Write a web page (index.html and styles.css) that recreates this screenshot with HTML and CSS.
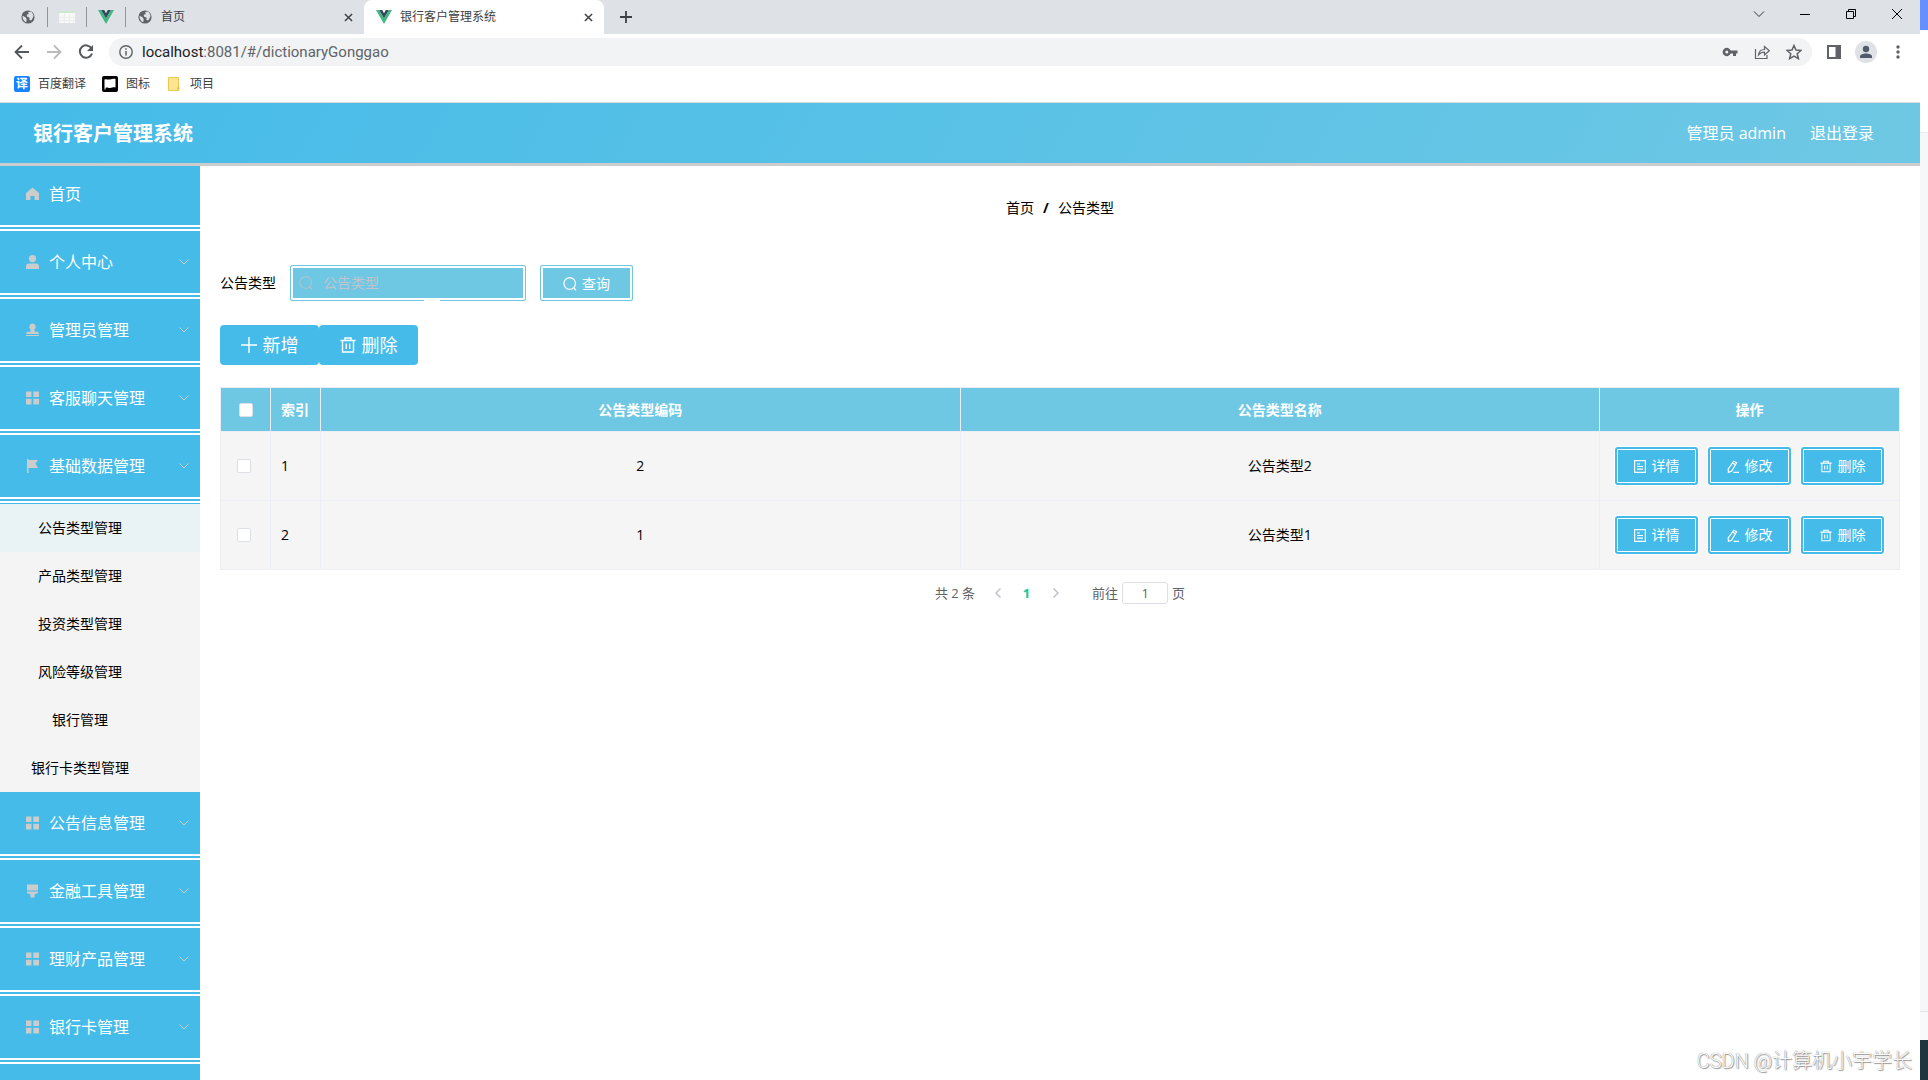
FILE: index.html
```html
<!DOCTYPE html>
<html lang="zh-CN">
<head>
    <meta charset="utf-8">
    <title>银行客户管理系统</title>
    <link rel="stylesheet" href="styles.css">
</head>
<body>
    <!-- shared icons -->
    <svg class="icon-defs" aria-hidden="true">
        <symbol id="i-globe" viewBox="0 0 16 16"><circle cx="8" cy="8" r="7.5" fill="#5f6368"/><path d="M2 6.500l3.500 2 1 2-.5 3.500C3.500 13 2 11 1.800 8zM8 2.500l3-.8c2 1 3.200 3 3.300 5.300-1 1.500-1 3-2.800 5l-2-1 .3-2.300-2.800-1L6.500 5.500 9 4.500z" fill="#dee1e6"/></symbol>
        <symbol id="i-vue" viewBox="0 0 16 14"><path d="M0 0h3.200L8 8.300 12.800 0H16L8 14z" fill="#41b883"/><path d="M3.200 0h3L8 3.200 9.800 0h3L8 8.300z" fill="#35495e"/></symbol>
        <symbol id="i-x" viewBox="0 0 10 10"><path d="M1 1l8 8M9 1L1 9" fill="none" stroke="currentColor" stroke-width="1.600"/></symbol>
        <symbol id="i-grid" viewBox="0 0 13 13"><path d="M0 0h5.500v5.500H0zM7.300 0H13v5.500H7.300zM0 7.300h5.500V13H0zM7.300 7.300H13V13H7.300z" fill="currentColor"/></symbol>
        <symbol id="i-home" viewBox="0 0 13 13"><path d="M6.500 0L13 5.500V12.500H8.500V8.500h-4v4H0v-7z" fill="currentColor"/></symbol>
        <symbol id="i-user" viewBox="0 0 13 14"><circle cx="6.500" cy="3.600" r="3.600" fill="currentColor"/><path d="M0 14v-2.500Q0 8.500 3 8.500h7q3 0 3 3V14z" fill="currentColor"/></symbol>
        <symbol id="i-stamp" viewBox="0 0 13 13"><path d="M6.500 0a3.300 3.300 0 0 1 2 5.900V8.300H12l1 2.200H0l1-2.200h3.500V5.900A3.300 3.300 0 0 1 6.500 0zM0 11.500h13v1H0z" fill="currentColor"/></symbol>
        <symbol id="i-flag" viewBox="0 0 13 14"><path d="M1 0h1.500v1H12L9.500 4.500 12 9H2.500v5H1z" fill="currentColor"/></symbol>
        <symbol id="i-brush" viewBox="0 0 13 13"><path d="M1 0h11v6H1zM1 7h11v1.500L8.500 10v3h-4v-3L1 8.500z" fill="currentColor"/></symbol>
        <symbol id="i-down" viewBox="0 0 10 6"><path d="M.5.5L5 5 9.500.5" fill="none" stroke="currentColor"/></symbol>
        <symbol id="i-search" viewBox="0 0 14 14"><path d="M11 11l2 2.300M12.500 6.500a5.800 5.800 0 1 1-11.600 0 5.800 5.800 0 0 1 11.600 0z" fill="none" stroke="currentColor" stroke-width="1.200"/></symbol>
        <symbol id="i-trash" viewBox="0 0 16 16"><path d="M.5 3.500h15M5 3V1h6v2M2.500 3.500v11.500h11V3.500M6.300 6.500v5.500M9.700 6.500v5.500" fill="none" stroke="currentColor" stroke-width="1.400"/></symbol>
        <symbol id="i-doc" viewBox="0 0 12 13"><path d="M.6.6h10.800v11.800H.6zM3 4h3M3 6.500h6M3 9.200h6" fill="none" stroke="currentColor" stroke-width="1.200"/></symbol>
        <symbol id="i-edit" viewBox="0 0 12 13"><path d="M6.800 1.200l2.800 1.600-5 8.500-3.200 1L1.200 9zM5.500 3l3 1.800M6.500 12.400H12" fill="none" stroke="currentColor" stroke-width="1.200"/></symbol>
    </svg>

    <div class="browser">
        <div class="tab-strip">
            <div class="pinned"><svg class="fav"><use href="#i-globe"/></svg></div>
            <div class="pinned"><svg class="fav" viewBox="0 0 16 14"><path d="M0 1h16v12H0z" fill="#f8f8f8"/><path d="M0 1h16v2H0z" fill="#cde8cd"/><path d="M0 7.500h16M0 10.500h16M5.500 4v9M10.500 4v9" stroke="#ececec"/></svg></div>
            <div class="pinned"><svg class="fav"><use href="#i-vue"/></svg></div>
            <div class="tab"><svg class="fav"><use href="#i-globe"/></svg><span>首页</span><button class="tab-close" aria-label="关闭"><svg><use href="#i-x"/></svg></button></div>
            <div class="tab active"><svg class="fav"><use href="#i-vue"/></svg><span>银行客户管理系统</span><button class="tab-close" aria-label="关闭"><svg><use href="#i-x"/></svg></button></div>
            <button class="new-tab" aria-label="新标签页"><svg viewBox="0 0 12 12"><path d="M6 0v12M0 6h12" stroke="#3c4043" stroke-width="1.800"/></svg></button>
            <div class="win-buttons">
                <button aria-label="搜索标签页"><svg viewBox="0 0 12 12"><path d="M1 3.500l5 5 5-5" fill="none" stroke="#333"/></svg></button>
                <button aria-label="最小化"><svg viewBox="0 0 12 12"><path d="M1 6.500h10" stroke="#000"/></svg></button>
                <button aria-label="还原"><svg viewBox="0 0 12 12"><path d="M1.500 3.500h7v7h-7zM3.500 3V1.500h7v7H9" fill="none" stroke="#000"/></svg></button>
                <button aria-label="关闭窗口"><svg viewBox="0 0 12 12"><path d="M1 1l10 10M11 1L1 11" stroke="#000"/></svg></button>
            </div>
        </div>

        <div class="toolbar">
            <button aria-label="后退"><svg viewBox="0 0 16 16"><path d="M15 8H2M8 1.500L1.500 8 8 14.500" fill="none" stroke="#54585d" stroke-width="1.800"/></svg></button>
            <button aria-label="前进"><svg viewBox="0 0 16 16"><path d="M1 8h13M8 1.500L14.500 8 8 14.500" fill="none" stroke="#bbb" stroke-width="1.800"/></svg></button>
            <button aria-label="刷新"><svg viewBox="0 0 16 16"><path d="M13.500 4.500A6.200 6.200 0 1 0 14 9.500" fill="none" stroke="#54585d" stroke-width="2"/><path d="M15 1v6H9z" fill="#54585d"/></svg></button>
            <div class="omnibox">
                <svg class="info" viewBox="0 0 14 14"><circle cx="7" cy="7" r="6.200" fill="none" stroke="#5f6368" stroke-width="1.400"/><path d="M7 6v4.500M7 3.300v1.500" stroke="#5f6368" stroke-width="1.500"/></svg>
                <span class="url"><b>localhost</b>:8081/#/dictionaryGonggao</span>
                <button aria-label="密码"><svg viewBox="0 0 16 16"><path d="M8.700 6.500A4.200 4.200 0 1 0 8.700 9.500H11V12h3V9.500h1.500v-3zM4.800 9.500a1.500 1.500 0 1 1 0-3 1.500 1.500 0 0 1 0 3z" fill="#5f6368" fill-rule="evenodd"/></svg></button>
                <button aria-label="分享"><svg viewBox="0 0 16 16"><path d="M1.500 5v9.500h11.500V11M4.500 11c.3-3.500 2.500-5.500 6-5.500V2.500l4.800 4.300-4.800 4.200V8c-2.500 0-4.300.8-6 3z" fill="none" stroke="#5f6368" stroke-width="1.200"/></svg></button>
                <button aria-label="收藏"><svg viewBox="0 0 16 16"><path d="M8 1.500l2 4.600 5 .4-3.800 3.300 1.200 4.900L8 12.100l-4.400 2.600 1.200-4.900L1 6.500l5-.4z" fill="none" stroke="#5f6368" stroke-width="1.500"/></svg></button>
            </div>
            <button aria-label="侧边栏"><svg viewBox="0 0 16 16"><path d="M1 1h14v14H1z" fill="#5f6368"/><path d="M3 3h6.500v10H3z" fill="#fff"/></svg></button>
            <button class="avatar" aria-label="用户"><svg viewBox="0 0 22 22"><circle cx="11" cy="11" r="11" fill="#dee1e6"/><circle cx="11" cy="8" r="3.200" fill="#505a6b"/><path d="M5 17v-1.500c0-2 3-3 6-3s6 1 6 3V17z" fill="#505a6b"/></svg></button>
            <button aria-label="菜单"><svg viewBox="0 0 16 16"><g fill="#5f6368"><circle cx="8" cy="3" r="1.700"/><circle cx="8" cy="8" r="1.700"/><circle cx="8" cy="13" r="1.700"/></g></svg></button>
        </div>

        <div class="bookmarks">
            <a href="#"><span class="fanyi">译</span>百度翻译</a>
            <a href="#"><svg viewBox="0 0 16 16"><rect width="16" height="16" rx="2"/><path d="M2.500 13.500V3.500c2-1 3.500.5 5.500 0s3.500-1 5.500-.5v8.500c-2-.5-3.500.5-5.500.5s-3-1-4.500 0v1.500z" fill="#fff"/></svg>图标</a>
            <a href="#"><svg viewBox="0 0 16 16"><path d="M2.500 1.500h10v13h-10z" fill="#ffe591" stroke="#edc850"/><path d="M11 14.500v-3l2.500-1v4z" fill="#edc850"/></svg>项目</a>
        </div>

        <header class="app-header">
            <h1>银行客户管理系统</h1>
            <span class="who">管理员 admin</span>
            <a href="#">退出登录</a>
        </header>

        <div class="app-body">
            <nav class="sidebar">
                <a class="menu-item" href="#"><svg><use href="#i-home"/></svg><span>首页</span></a>
                <a class="menu-item" href="#"><svg><use href="#i-user"/></svg><span>个人中心</span><svg class="arrow"><use href="#i-down"/></svg></a>
                <a class="menu-item" href="#"><svg><use href="#i-stamp"/></svg><span>管理员管理</span><svg class="arrow"><use href="#i-down"/></svg></a>
                <a class="menu-item" href="#"><svg><use href="#i-grid"/></svg><span>客服聊天管理</span><svg class="arrow"><use href="#i-down"/></svg></a>
                <a class="menu-item" href="#"><svg><use href="#i-flag"/></svg><span>基础数据管理</span><svg class="arrow"><use href="#i-down"/></svg></a>
                <div class="submenu">
                    <a class="active" href="#">公告类型管理</a>
                    <a href="#">产品类型管理</a>
                    <a href="#">投资类型管理</a>
                    <a href="#">风险等级管理</a>
                    <a href="#">银行管理</a>
                    <a href="#">银行卡类型管理</a>
                </div>
                <a class="menu-item" href="#"><svg><use href="#i-grid"/></svg><span>公告信息管理</span><svg class="arrow"><use href="#i-down"/></svg></a>
                <a class="menu-item" href="#"><svg><use href="#i-brush"/></svg><span>金融工具管理</span><svg class="arrow"><use href="#i-down"/></svg></a>
                <a class="menu-item" href="#"><svg><use href="#i-grid"/></svg><span>理财产品管理</span><svg class="arrow"><use href="#i-down"/></svg></a>
                <a class="menu-item" href="#"><svg><use href="#i-grid"/></svg><span>银行卡管理</span><svg class="arrow"><use href="#i-down"/></svg></a>
            </nav>

            <main class="content">
                <div class="breadcrumb"><a href="#">首页</a><b>/</b><span>公告类型</span></div>

                <form class="search">
                    <label for="type-name">公告类型</label>
                    <div class="search-box">
                        <svg><use href="#i-search"/></svg>
                        <input type="text" id="type-name" placeholder="公告类型">
                    </div>
                    <button type="button" class="query"><svg><use href="#i-search"/></svg>查询</button>
                </form>

                <div class="actions">
                    <button type="button"><svg viewBox="0 0 16 16"><path d="M8 0v16M0 8h16" stroke="currentColor" stroke-width="1.400"/></svg>新增</button>
                    <button type="button"><svg><use href="#i-trash"/></svg>删除</button>
                </div>

                <table class="list">
                    <thead>
                        <tr>
                            <th class="col-check"><input type="checkbox" aria-label="全选"></th>
                            <th class="col-index">索引</th>
                            <th>公告类型编码</th>
                            <th>公告类型名称</th>
                            <th class="col-ops">操作</th>
                        </tr>
                    </thead>
                    <tbody>
                        <tr>
                            <td class="col-check"><input type="checkbox" aria-label="选择第1行"></td>
                            <td class="col-index">1</td>
                            <td>2</td>
                            <td>公告类型2</td>
                            <td><div class="ops">
                                <button type="button"><svg><use href="#i-doc"/></svg>详情</button>
                                <button type="button"><svg><use href="#i-edit"/></svg>修改</button>
                                <button type="button"><svg><use href="#i-trash"/></svg>删除</button>
                            </div></td>
                        </tr>
                        <tr>
                            <td class="col-check"><input type="checkbox" aria-label="选择第2行"></td>
                            <td class="col-index">2</td>
                            <td>1</td>
                            <td>公告类型1</td>
                            <td><div class="ops">
                                <button type="button"><svg><use href="#i-doc"/></svg>详情</button>
                                <button type="button"><svg><use href="#i-edit"/></svg>修改</button>
                                <button type="button"><svg><use href="#i-trash"/></svg>删除</button>
                            </div></td>
                        </tr>
                    </tbody>
                </table>

                <div class="pagination">
                    <span>共 2 条</span>
                    <button type="button" aria-label="上一页"><svg viewBox="0 0 8 10"><path d="M6.500.5L2 5l4.500 4.500" fill="none" stroke="#c0c4cc" stroke-width="1.500"/></svg></button>
                    <button type="button" class="current">1</button>
                    <button type="button" aria-label="下一页"><svg viewBox="0 0 8 10"><path d="M1.500.5L6 5 1.500 9.500" fill="none" stroke="#c0c4cc" stroke-width="1.500"/></svg></button>
                    <label class="jump">前往<input type="text" value="1">页</label>
                </div>
            </main>
        </div>
    </div>

    <div class="edge">
        <div class="edge-blue"></div>
        <div class="edge-white"></div>
        <div class="edge-grey"></div>
        <div class="edge-line"></div>
        <div class="edge-dark"></div>
    </div>
    <div class="watermark">CSDN @计算机小宇学长</div>
</body>
</html>
```

FILE: styles.css
```css
* {
    box-sizing: border-box;
}

body {
    display: flex;
    height: 100vh;
    margin: 0;
    overflow: hidden;
    background: #fff;
    color: #000;
    font-family: "Open Sans", "Noto Sans CJK SC", sans-serif;
    font-size: 14px;
    line-height: 20px;
}

a {
    color: inherit;
    text-decoration: none;
}

button {
    display: flex;
    align-items: center;
    justify-content: center;
    padding: 0;
    border: none;
    background: none;
    color: inherit;
    font: inherit;
}

input {
    font: inherit;
}

svg {
    display: block;
    flex: none;
}

.icon-defs {
    position: absolute;
    width: 0;
    height: 0;
}

.browser {
    display: flex;
    flex: 1;
    flex-direction: column;
    min-width: 0;
}

/* tabs */
.tab-strip {
    display: flex;
    flex: none;
    align-items: flex-end;
    height: 34px;
    padding-left: 9px;
    background: #dee1e6;
    color: #3c4043;
    font-size: 12px;
}

.fav {
    width: 16px;
    height: 14px;
}

.pinned {
    display: flex;
    align-items: center;
    justify-content: center;
    width: 39px;
    height: 20px;
    margin-bottom: 7px;
    border-right: 1px solid #919499;
}

.tab {
    display: flex;
    align-items: center;
    gap: 8px;
    width: 238px;
    height: 34px;
    padding: 0 9px 0 11px;
}

.tab.active {
    width: 240px;
    padding-left: 12px;
    border-radius: 8px 8px 0 0;
    background: #fff;
}

.tab-close {
    width: 14px;
    height: 14px;
    margin-left: auto;
}

.tab-close svg {
    width: 9px;
    height: 9px;
}

.new-tab {
    width: 44px;
    height: 34px;
}

.new-tab svg,
.win-buttons svg {
    width: 12px;
    height: 12px;
}

.win-buttons {
    display: flex;
    margin-left: auto;
}

.win-buttons button {
    width: 46px;
    height: 28px;
    margin-bottom: 6px;
}

/* address bar */
.toolbar {
    display: flex;
    flex: none;
    align-items: center;
    height: 36px;
    padding: 0 6px;
}

.toolbar button {
    width: 32px;
    height: 28px;
}

.toolbar svg {
    width: 16px;
    height: 16px;
}

.toolbar .omnibox {
    display: flex;
    flex: 1;
    align-items: center;
    height: 28px;
    margin: 0 6px 0 7px;
    padding: 0 2px 0 10px;
    border-radius: 14px;
    background: #f1f3f4;
}

.toolbar .info {
    width: 14px;
    height: 14px;
    margin-right: 9px;
}

.url {
    flex: 1;
    color: #5f6368;
    font-family: Roboto, "Open Sans", sans-serif;
    font-size: 15px;
}

.url b {
    color: #202124;
    font-weight: normal;
}

.toolbar .avatar svg {
    width: 22px;
    height: 22px;
}

.bookmarks {
    display: flex;
    flex: none;
    gap: 16px;
    height: 33px;
    padding: 4px 14px 0;
    border-bottom: 1px solid #dadce0;
    color: #3c4043;
    font-size: 12px;
}

.bookmarks a {
    display: flex;
    align-items: center;
    gap: 8px;
    height: 20px;
}

.bookmarks svg,
.fanyi {
    width: 16px;
    height: 16px;
}

.fanyi {
    border-radius: 2px;
    background: #1485ff;
    color: #fff;
    font-weight: bold;
    line-height: 15px;
    text-align: center;
}

/* app header */
.app-header {
    position: relative;
    z-index: 1;
    display: flex;
    flex: none;
    align-items: center;
    gap: 24px;
    height: 63px;
    padding: 0 46px 0 33px;
    border-bottom: 3px solid #ccc;
    background: linear-gradient(120deg, #45bbe9, #6ec8e4);
    color: #fff;
    font-size: 16px;
}

.app-header h1 {
    margin: 0 auto 0 0;
    padding-top: 2px;
    font-size: 20px;
}

.app-body {
    display: flex;
    flex: 1;
    min-height: 0;
    margin-top: -3px;
}

/* sidebar */
.sidebar {
    width: 200px;
    overflow: hidden;
    background: #45bbe9;
}

.menu-item {
    display: flex;
    align-items: center;
    height: 68px;
    padding: 0 11px 0 26px;
    border-bottom: 6px double #fff;
    color: #fff;
    font-size: 16px;
}

.menu-item svg {
    width: 13px;
    height: 14px;
    color: #ccc;
}

.menu-item span {
    flex: 1;
    margin-left: 10px;
}

.menu-item .arrow {
    width: 10px;
    height: 6px;
}

.submenu {
    margin-top: 1px;
    background: #f4f4f4;
}

.submenu a {
    display: block;
    height: 48px;
    padding-right: 40px;
    line-height: 48px;
    text-align: center;
}

.submenu a.active {
    background: #e9f2f5;
}

/* content */
.content {
    flex: 1;
    min-width: 0;
    padding: 35px 20px 0;
}

.breadcrumb {
    display: flex;
    justify-content: center;
    gap: 9px;
}

.search {
    display: flex;
    align-items: center;
    gap: 14px;
    height: 36px;
    margin-top: 47px;
}

.search-box {
    position: relative;
    display: flex;
    align-items: center;
    width: 236px;
    height: 36px;
    padding: 0 8px;
    border: 1px solid #6ec8e4;
    border-radius: 2px;
    background: #6ec8e4;
    box-shadow: inset 0 0 0 2px #fff;
    color: #a9c3d0;
}

/* notch in the lower border */
.search-box::after {
    position: absolute;
    bottom: -1px;
    left: 133px;
    width: 16px;
    height: 1px;
    background: #fff;
    content: "";
}

.search-box input {
    flex: 1;
    min-width: 0;
    padding: 0 0 0 10px;
    border: none;
    outline: none;
    background: none;
    color: #fff;
}

.search-box input::placeholder {
    color: #c0c4cc;
}

.search svg {
    width: 14px;
    height: 14px;
}

.query {
    gap: 5px;
    width: 93px;
    height: 36px;
    padding-top: 2px;
    border: 1px solid #6ec8e4;
    border-radius: 2px;
    background: #6ec8e4;
    box-shadow: inset 0 0 0 2px #fff;
    color: #fff;
}

.actions {
    display: flex;
    margin-top: 24px;
}

.actions button {
    gap: 6px;
    width: 99px;
    height: 40px;
    border-radius: 4px;
    background: #45bbe9;
    color: #fff;
    font-size: 18px;
}

.actions svg {
    width: 16px;
    height: 16px;
}

/* table */
.list {
    width: 100%;
    margin-top: 22px;
    border: solid #ebeef5;
    border-width: 1px 0 0 1px;
    border-spacing: 0;
    table-layout: fixed;
}

.list th,
.list td {
    padding: 0;
    border: solid #ebeef5;
    border-width: 0 1px 1px 0;
    text-align: center;
}

.list th {
    height: 44px;
    background: #6ec8e4;
    color: #fff;
}

.list td {
    height: 69px;
    background: #f5f5f5;
}

.list .col-check,
.list .col-index {
    width: 50px;
}

.list .col-index {
    padding-left: 10px;
    text-align: left;
}

.list .col-ops {
    width: 300px;
}

.list td.col-check {
    padding-right: 4px;
}

.list input {
    display: block;
    width: 14px;
    height: 14px;
    margin: 0 auto;
    border: 1px solid #dcdfe6;
    border-radius: 2px;
    background: #fff;
    appearance: none;
}

.ops {
    display: flex;
    justify-content: center;
    gap: 10px;
}

.ops button {
    gap: 6px;
    width: 83px;
    height: 38px;
    border: 2px solid #45bbe9;
    border-radius: 3px;
    background: #45bbe9;
    box-shadow: inset 0 0 0 1px #fff, 0 0 0 1px #fff;
    color: #fff;
}

.ops svg {
    width: 12px;
    height: 13px;
}

/* pagination */
.pagination {
    display: flex;
    align-items: center;
    justify-content: center;
    height: 22px;
    margin-top: 12px;
    color: #606266;
    font-size: 13px;
}

.pagination button {
    width: 29px;
    height: 22px;
}

.pagination span {
    margin-right: 8px;
}

.pagination svg {
    width: 8px;
    height: 10px;
}

.pagination .current {
    color: #18c79c;
    font-weight: bold;
}

.jump {
    display: flex;
    align-items: center;
    gap: 4px;
    margin-left: 22px;
}

.jump input {
    width: 46px;
    height: 22px;
    padding: 0;
    border: 1px solid #dcdfe6;
    border-radius: 3px;
    color: #606266;
    text-align: center;
}

/* strip of the window behind */
.edge {
    display: flex;
    flex: none;
    flex-direction: column;
    width: 8px;
}

.edge-blue {
    height: 30px;
    background: #6690ff;
}

.edge-white {
    height: 102px;
}

.edge-grey {
    flex: 1;
    border-top: 1px solid #e8eaec;
    background: #f6f7f9;
}

.edge-line {
    height: 29px;
    border-top: 1px solid #e3e5e8;
    background: #f8f9fa;
}

.edge-dark {
    height: 40px;
    background: #20363f;
}

.watermark {
    position: absolute;
    right: 16px;
    bottom: 5px;
    color: #fff;
    font-family: Roboto, "Noto Sans CJK SC", sans-serif;
    font-size: 20px;
    font-weight: 300;
    line-height: 28px;
    text-shadow: 0 0 1px #666, 1px 1px 1px #999;
}
```
